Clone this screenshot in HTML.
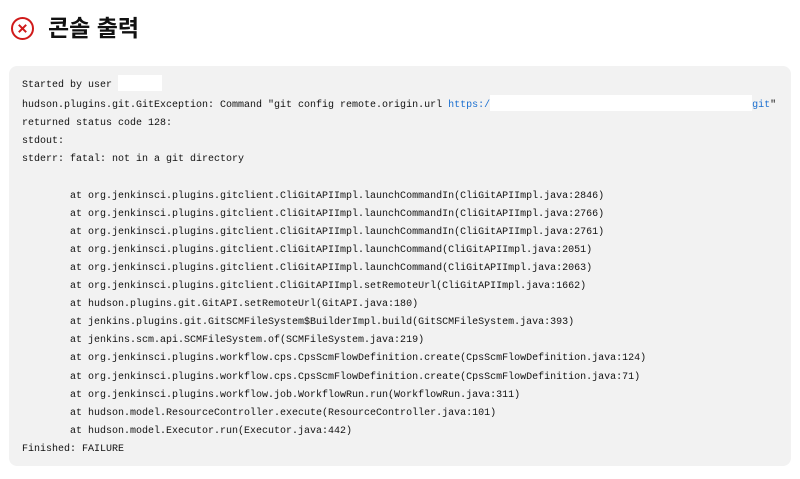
<!DOCTYPE html>
<html><head><meta charset="utf-8"><style>
body{margin:0;background:#fff;width:800px;height:479px;overflow:hidden;position:relative}
h1{position:absolute;left:48px;top:12px;margin:0;font:bold 23px/32px "Liberation Sans","Noto Sans CJK KR",sans-serif;color:#111}
.box{position:absolute;left:9px;top:66px;width:782px;height:400px;background:#f2f2f2;border-radius:8px}
pre{position:absolute;left:22px;top:75px;margin:0;font:10px/18.1px "Liberation Mono","DejaVu Sans Mono",monospace;color:#111}
.w{background:#fff;display:inline-block;height:16px;vertical-align:-4px}
a{color:#1a6fd0;text-decoration:none}
</style></head><body>
<svg style="position:absolute;left:10px;top:16px" width="25" height="25" viewBox="0 0 25 25"><circle cx="12.5" cy="12.5" r="10.5" fill="none" stroke="#d01a1a" stroke-width="2"/><path d="M8.8 8.8L16.2 16.2M16.2 8.8L8.8 16.2" stroke="#d01a1a" stroke-width="2"/></svg>
<h1>콘솔 출력</h1>
<div class="box"></div>
<pre>Started by user <span class="w" style="width:44px"></span>
hudson.plugins.git.GitException: Command "git config remote.origin.url <a>https:/<span class="w" style="width:262px"></span>git</a>"
returned status code 128:
stdout: 
stderr: fatal: not in a git directory

        at org.jenkinsci.plugins.gitclient.CliGitAPIImpl.launchCommandIn(CliGitAPIImpl.java:2846)
        at org.jenkinsci.plugins.gitclient.CliGitAPIImpl.launchCommandIn(CliGitAPIImpl.java:2766)
        at org.jenkinsci.plugins.gitclient.CliGitAPIImpl.launchCommandIn(CliGitAPIImpl.java:2761)
        at org.jenkinsci.plugins.gitclient.CliGitAPIImpl.launchCommand(CliGitAPIImpl.java:2051)
        at org.jenkinsci.plugins.gitclient.CliGitAPIImpl.launchCommand(CliGitAPIImpl.java:2063)
        at org.jenkinsci.plugins.gitclient.CliGitAPIImpl.setRemoteUrl(CliGitAPIImpl.java:1662)
        at hudson.plugins.git.GitAPI.setRemoteUrl(GitAPI.java:180)
        at jenkins.plugins.git.GitSCMFileSystem$BuilderImpl.build(GitSCMFileSystem.java:393)
        at jenkins.scm.api.SCMFileSystem.of(SCMFileSystem.java:219)
        at org.jenkinsci.plugins.workflow.cps.CpsScmFlowDefinition.create(CpsScmFlowDefinition.java:124)
        at org.jenkinsci.plugins.workflow.cps.CpsScmFlowDefinition.create(CpsScmFlowDefinition.java:71)
        at org.jenkinsci.plugins.workflow.job.WorkflowRun.run(WorkflowRun.java:311)
        at hudson.model.ResourceController.execute(ResourceController.java:101)
        at hudson.model.Executor.run(Executor.java:442)
Finished: FAILURE</pre>
</body></html>
